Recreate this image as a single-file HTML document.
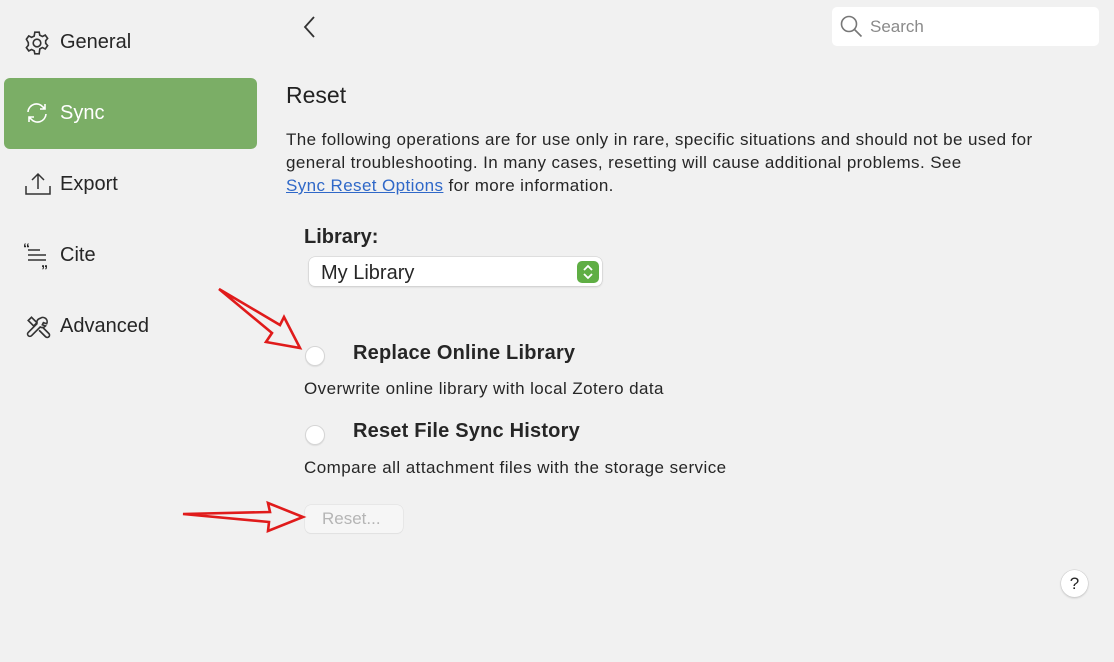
<!DOCTYPE html>
<html><head><meta charset="utf-8"><style>
body{margin:0;width:1114px;height:662px;background:#f1f1f1;font-family:"Liberation Sans",sans-serif;color:#262626;position:relative;overflow:hidden}
.a{position:absolute;white-space:nowrap}
.nav{font-size:20px;color:#262626}
.sel{position:absolute;left:4px;top:78px;width:253px;height:71px;background:#7bae66;border-radius:6px}
.p{font-size:17px;line-height:23px}
.radio{position:absolute;width:18px;height:18px;border-radius:50%;background:#fff;border:1px solid #d6d6d6;box-shadow:0 1px 1px rgba(0,0,0,.08)}
.h{font-size:20px;font-weight:bold;letter-spacing:0.2px}
</style></head><body>
<div class="sel"></div>
<svg class="a" style="left:24px;top:30px" width="26" height="26" viewBox="0 0 24 24" fill="none" stroke="#333" stroke-width="1.5"><circle cx="12" cy="12" r="3.5"/><path d="M10 2h4l.6 2.8 2.4 1.2 2.6-1.3 2.2 3-1.8 2.2v2.4l1.8 2.2-2.2 3-2.6-1.3-2.4 1.2L14 22h-4l-.6-2.8-2.4-1.2-2.6 1.3-2.2-3 1.8-2.2v-2.4L2.2 8.5l2.2-3L7 6.8l2.4-1.2z"/></svg>
<div class="a nav" style="left:60px;top:31px">General</div>
<svg class="a" style="left:25px;top:101px" width="24" height="24" viewBox="0 0 24 24" fill="none" stroke="#fff" stroke-width="1.6"><path d="M3 11a8.5 8.5 0 0 1 15-5l2 2M20 3v5h-5M21 13a8.5 8.5 0 0 1-15 5l-2-2M4 21v-5h5"/></svg>
<div class="a nav" style="left:60px;top:102px;color:#fff">Sync</div>
<svg class="a" style="left:25px;top:172px" width="26" height="24" viewBox="0 0 26 24" fill="none" stroke="#333" stroke-width="1.5"><path d="M1 14v8h24v-8M13 17V2M7 8l6-6 6 6"/></svg>
<div class="a nav" style="left:60px;top:173px">Export</div>
<div class="a" style="left:23px;top:240px;font-size:14px;font-weight:bold">“</div>
<svg class="a" style="left:28px;top:249px" width="20" height="14"><path d="M0 1h12M0 6h18M0 11h18" stroke="#333" stroke-width="1.5"/></svg>
<div class="a" style="left:41px;top:254px;font-size:14px;font-weight:bold">„</div>
<div class="a nav" style="left:60px;top:244px">Cite</div>
<svg class="a" style="left:25px;top:314px" width="26" height="26" viewBox="0 0 24 24" fill="none" stroke="#333" stroke-width="1.5"><path d="M3 6l3-3 5 5-3 3zM13 15l6 6a2 2 0 0 0 3-3l-6-6M14 4a4 4 0 0 1 6 5l-3-1-1 2 3 1a4 4 0 0 1-5 1L6 20a2 2 0 0 1-3-3l8-8a4 4 0 0 1 3-5z"/></svg>
<div class="a nav" style="left:60px;top:315px">Advanced</div>

<svg class="a" style="left:302px;top:15px" width="14" height="24"><path d="M12 2L3 12l9 10" stroke="#333" stroke-width="1.8" fill="none"/></svg>
<div class="a" style="left:832px;top:7px;width:267px;height:39px;background:#fff;border-radius:5px"></div>
<svg class="a" style="left:839px;top:14px" width="26" height="26" viewBox="0 0 26 26" fill="none" stroke="#777" stroke-width="1.6"><circle cx="10" cy="10" r="7.5"/><path d="M15.5 15.5l7 7"/></svg>
<div class="a" style="left:870px;top:17px;font-size:17px;color:#8a8a8a">Search</div>

<div class="a" style="left:286px;top:82px;font-size:23px;color:#222">Reset</div>
<div class="a p" style="left:286px;top:128px;letter-spacing:0.4px">The following operations are for use only in rare, specific situations and should not be used for<br>general troubleshooting. In many cases, resetting will cause additional problems. See<br><span style="color:#2f68c8;text-decoration:underline">Sync Reset Options</span> for more information.</div>

<div class="a" style="left:304px;top:226px;font-size:20px;font-weight:bold">Library:</div>
<div class="a" style="left:309px;top:257px;width:293px;height:29px;background:#fff;border-radius:6px;box-shadow:0 0 0 .5px #ccc,0 1px 2px rgba(0,0,0,.15)"></div>
<div class="a" style="left:321px;top:262px;font-size:20px">My Library</div>
<div class="a" style="left:577px;top:261px;width:22px;height:22px;background:#5fae44;border-radius:5px"></div>
<svg class="a" style="left:581px;top:263px" width="14" height="18"><path d="M3 7l4-4 4 4M3 11l4 4 4-4" stroke="#fff" stroke-width="1.8" fill="none"/></svg>

<div class="radio" style="left:305px;top:346px"></div>
<div class="a h" style="left:353px;top:342px">Replace Online Library</div>
<div class="a p" style="left:304px;top:377px;letter-spacing:0.42px">Overwrite online library with local Zotero data</div>
<div class="radio" style="left:305px;top:425px"></div>
<div class="a h" style="left:353px;top:420px">Reset File Sync History</div>
<div class="a p" style="left:304px;top:456px;letter-spacing:0.45px">Compare all attachment files with the storage service</div>
<div class="a" style="left:305px;top:505px;width:98px;height:28px;background:#f6f6f6;border-radius:6px;box-shadow:0 0 0 .5px #ddd,0 1px 1px rgba(0,0,0,.06)"></div>
<div class="a" style="left:322px;top:509px;font-size:17px;color:#b5b5b5">Reset...</div>

<div class="a" style="left:1061px;top:570px;width:27px;height:27px;border-radius:50%;background:#fff;box-shadow:0 0 0 .5px #ccc,0 1px 2px rgba(0,0,0,.2);text-align:center;line-height:27px;font-size:17px">?</div>

<svg class="a" style="left:0;top:0" width="1114" height="662" fill="none" stroke="#e01b1b" stroke-width="2.6" stroke-linejoin="miter">
<path d="M219 289 L280 325 L284 317 L300 348 L266 342 L272 333 Z"/>
<path d="M183 514 L270 512 L268 503 L303 517 L268 531 L269 522 Z"/>
</svg>
</body></html>
